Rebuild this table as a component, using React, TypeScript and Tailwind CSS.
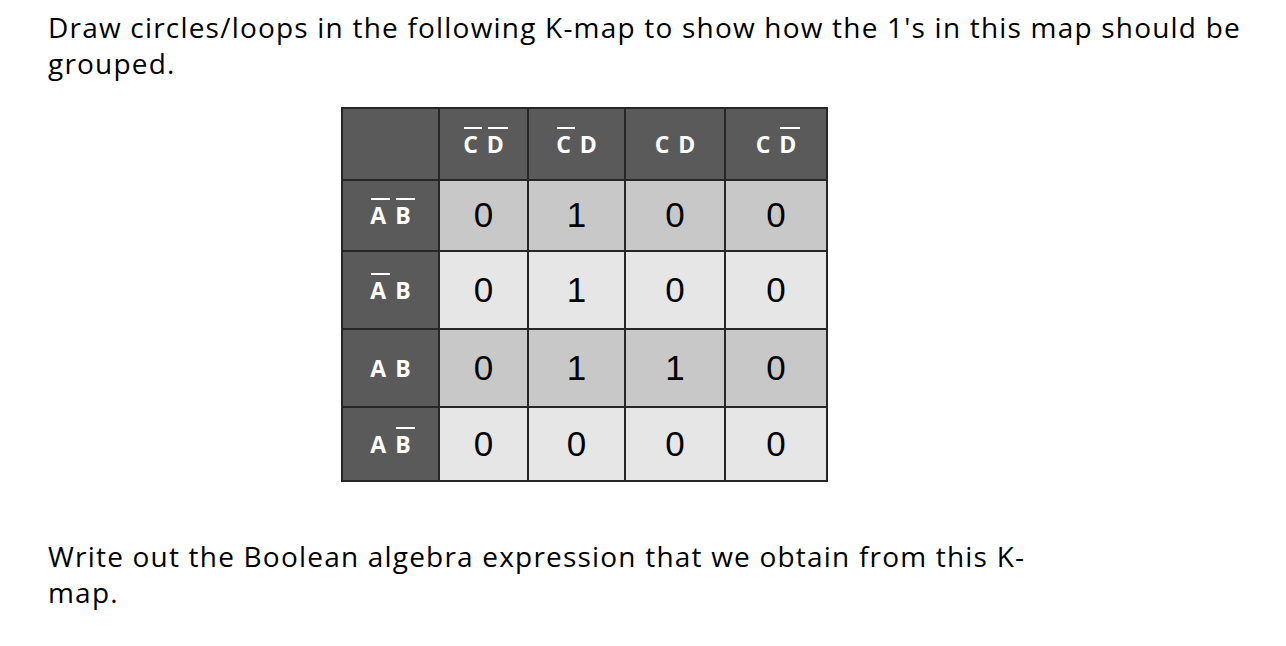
import React from 'react';

// one letter of a header label, optionally with a bar (complement) over it
const Lit: React.FC<{ ch: string; neg?: boolean }> = ({ ch, neg }) => (
    <span className="relative inline-block leading-none">
        {neg && <span className="absolute left-[1px] right-[-4px] top-[-6px] h-[2px] bg-white" />}
        {ch}
    </span>
);

const Label: React.FC<{ a: [string, boolean]; b: [string, boolean] }> = ({ a, b }) => (
    <div className="flex items-center justify-center gap-[9px] text-[23px] font-bold text-white">
        <Lit ch={a[0]} neg={a[1]} />
        <Lit ch={b[0]} neg={b[1]} />
    </div>
);

const cols: [string, boolean][][] = [
    [['C', true], ['D', true]],
    [['C', true], ['D', false]],
    [['C', false], ['D', false]],
    [['C', false], ['D', true]],
];

const rows: { label: [string, boolean][]; values: number[]; shade: string }[] = [
    { label: [['A', true], ['B', true]], values: [0, 1, 0, 0], shade: 'bg-[#c8c8c8]' },
    { label: [['A', true], ['B', false]], values: [0, 1, 0, 0], shade: 'bg-[#e6e6e6]' },
    { label: [['A', false], ['B', false]], values: [0, 1, 1, 0], shade: 'bg-[#c8c8c8]' },
    { label: [['A', false], ['B', true]], values: [0, 0, 0, 0], shade: 'bg-[#e6e6e6]' },
];

const KMap: React.FC = () => (
    <div
        className="ml-[341px] mt-[26px] inline-grid grid-cols-[95px_87px_95px_98px_100px] grid-rows-[70px_69px_76px_76px_72px] gap-[2px] p-[2px] bg-[#262626]"
        style={{ fontFamily: '"Open Sans", "Noto Sans", sans-serif' }}
    >
        <div className="bg-[#5a5a5a]" />
        {cols.map((c, i) => (
            <div key={i} className="bg-[#5a5a5a] flex items-center justify-center">
                <Label a={c[0]} b={c[1]} />
            </div>
        ))}
        {rows.map((r, i) => (
            <React.Fragment key={i}>
                <div className="bg-[#5a5a5a] flex items-center justify-center">
                    <Label a={r.label[0]} b={r.label[1]} />
                </div>
                {r.values.map((v, j) => (
                    <div
                        key={j}
                        className={`${r.shade} flex items-center justify-center text-[35px] text-black`}
                        style={{ fontFamily: '"Liberation Sans", Arial, sans-serif' }}
                    >
                        {v}
                    </div>
                ))}
            </React.Fragment>
        ))}
    </div>
);

export default function App() {
    return (
        <div
            className="w-[1286px] h-[646px] bg-white text-black overflow-hidden"
            style={{ fontFamily: '"Open Sans", "Noto Sans", sans-serif' }}
        >
            <p className="pl-[48px] pt-[9px] text-[28px] leading-[36px] tracking-[1.2px] whitespace-nowrap">
                Draw circles/loops in the following K-map to show how the 1's in this map should be
                <br />
                grouped.
            </p>
            <KMap />
            <p className="pl-[48px] mt-[56px] text-[28px] leading-[36px] tracking-[1.2px] whitespace-nowrap">
                Write out the Boolean algebra expression that we obtain from this K-
                <br />
                map.
            </p>
        </div>
    );
}
